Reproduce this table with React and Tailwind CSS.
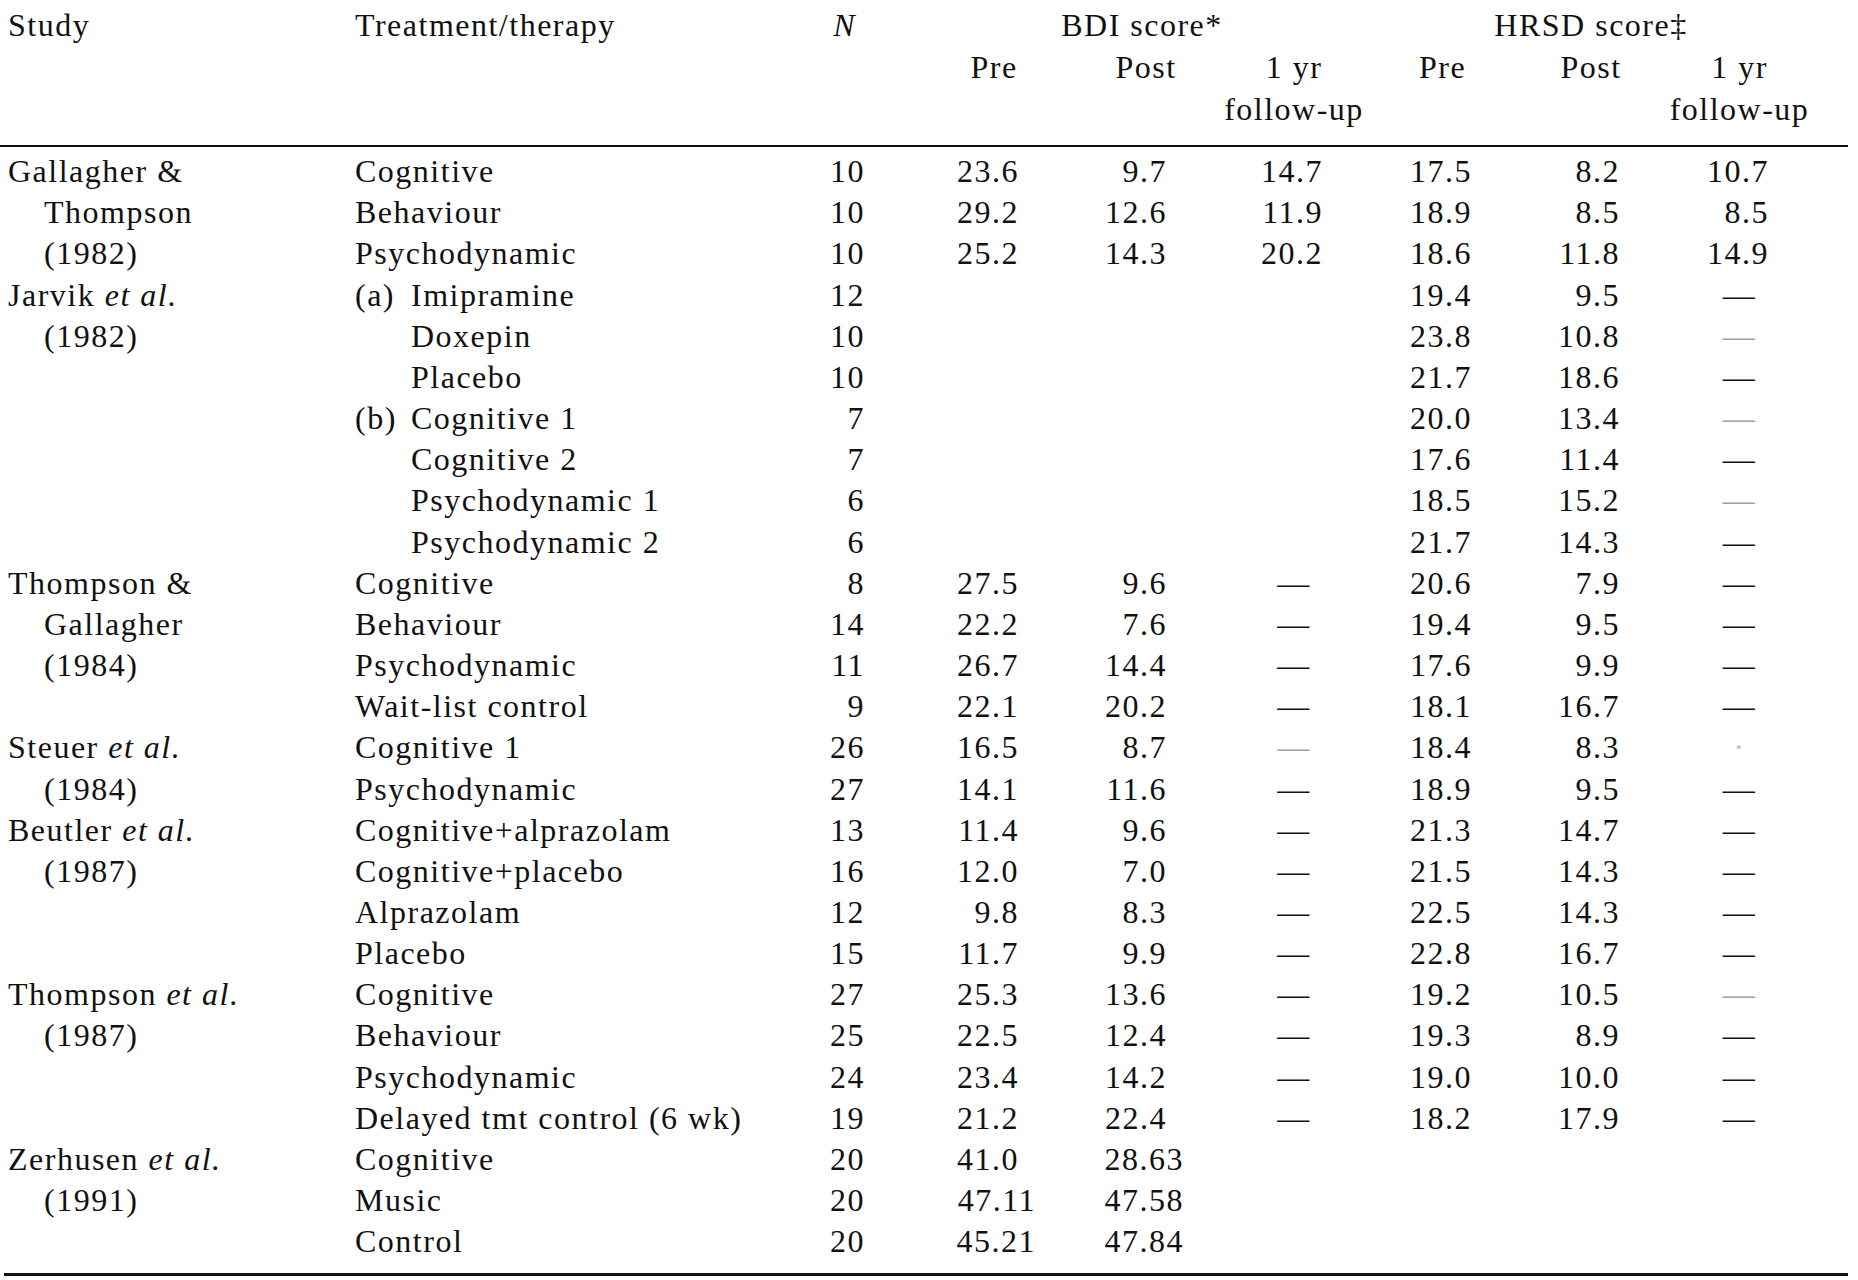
import React from "react";

const D = "—";
const rows = [
  ["Gallagher &", 0, "Cognitive", 0, "10", "23.6", "9.7", "14.7", "17.5", "8.2", "10.7"],
  ["Thompson", 1, "Behaviour", 0, "10", "29.2", "12.6", "11.9", "18.9", "8.5", "8.5"],
  ["(1982)", 1, "Psychodynamic", 0, "10", "25.2", "14.3", "20.2", "18.6", "11.8", "14.9"],
  ["JARVIK", 0, "Imipramine", "(a)", "12", "", "", "", "19.4", "9.5", D],
  ["(1982)", 1, "Doxepin", 1, "10", "", "", "", "23.8", "10.8", "f"],
  ["", 0, "Placebo", 1, "10", "", "", "", "21.7", "18.6", D],
  ["", 0, "Cognitive 1", "(b)", "7", "", "", "", "20.0", "13.4", "f"],
  ["", 0, "Cognitive 2", 1, "7", "", "", "", "17.6", "11.4", D],
  ["", 0, "Psychodynamic 1", 1, "6", "", "", "", "18.5", "15.2", "f"],
  ["", 0, "Psychodynamic 2", 1, "6", "", "", "", "21.7", "14.3", D],
  ["Thompson &", 0, "Cognitive", 0, "8", "27.5", "9.6", D, "20.6", "7.9", D],
  ["Gallagher", 1, "Behaviour", 0, "14", "22.2", "7.6", D, "19.4", "9.5", D],
  ["(1984)", 1, "Psychodynamic", 0, "11", "26.7", "14.4", D, "17.6", "9.9", D],
  ["", 0, "Wait-list control", 0, "9", "22.1", "20.2", D, "18.1", "16.7", D],
  ["STEUER", 0, "Cognitive 1", 0, "26", "16.5", "8.7", "f", "18.4", "8.3", "dot"],
  ["(1984)", 1, "Psychodynamic", 0, "27", "14.1", "11.6", D, "18.9", "9.5", D],
  ["BEUTLER", 0, "Cognitive+alprazolam", 0, "13", "11.4", "9.6", D, "21.3", "14.7", D],
  ["(1987)", 1, "Cognitive+placebo", 0, "16", "12.0", "7.0", D, "21.5", "14.3", D],
  ["", 0, "Alprazolam", 0, "12", "9.8", "8.3", D, "22.5", "14.3", D],
  ["", 0, "Placebo", 0, "15", "11.7", "9.9", D, "22.8", "16.7", D],
  ["THOMPSON", 0, "Cognitive", 0, "27", "25.3", "13.6", D, "19.2", "10.5", "f"],
  ["(1987)", 1, "Behaviour", 0, "25", "22.5", "12.4", D, "19.3", "8.9", D],
  ["", 0, "Psychodynamic", 0, "24", "23.4", "14.2", D, "19.0", "10.0", D],
  ["", 0, "Delayed tmt control (6 wk)", 0, "19", "21.2", "22.4", D, "18.2", "17.9", D],
  ["ZERHUSEN", 0, "Cognitive", 0, "20", "41.0", "28.63", "", "", "", ""],
  ["(1991)", 1, "Music", 0, "20", "47.11", "47.58", "", "", "", ""],
  ["", 0, "Control", 0, "20", "45.21", "47.84", "", "", "", ""],
];

const etal = {
  JARVIK: "Jarvik",
  STEUER: "Steuer",
  BEUTLER: "Beutler",
  THOMPSON: "Thompson",
  ZERHUSEN: "Zerhusen",
};

function StudyCell({ text, indent }) {
  if (etal[text]) {
    return (
      <div className="pl-[8px] whitespace-nowrap">
        {etal[text]} <span className="italic">et al.</span>
      </div>
    );
  }
  return <div className={`${indent ? "pl-[44px]" : "pl-[8px]"} whitespace-nowrap`}>{text}</div>;
}

function TreatCell({ text, sub }) {
  if (sub === "(a)" || sub === "(b)") {
    return (
      <div className="flex whitespace-nowrap">
        <span className="inline-block w-[56px]">{sub}</span>
        <span>{text}</span>
      </div>
    );
  }
  return <div className={`${sub ? "pl-[56px]" : ""} whitespace-nowrap`}>{text}</div>;
}

function Num({ v, pr }) {
  if (v === "") return <div />;
  if (v === D) return <div className="text-center">—</div>;
  if (v === "f") return <div className="text-center text-[#9ca3af]">—</div>;
  if (v === "dot") return <div className="text-center text-[#c0c0c0]">·</div>;
  const two = v.split(".")[1]?.length === 2;
  return (
    <div className={`text-right ${pr}`}>
      <span className={two ? "mr-[-17px]" : ""}>{v}</span>
    </div>
  );
}

export default function App() {
  const grid =
    "grid grid-cols-[355px_435px_126px_156px_148px_148px_149px_148px_149px] w-[1814px]";
  return (
    <div
      className="w-[1858px] h-[1280px] bg-white text-[#111] overflow-hidden"
      style={{ fontFamily: '"Liberation Serif", "Times New Roman", serif' }}
    >
      <div className="text-[32px] tracking-[1.5px] leading-[41.15px]">
        {/* header */}
        <div className={`${grid} pt-[5px]`}>
          <div className="pl-[8px] h-[42px]">Study</div>
          <div>Treatment/therapy</div>
          <div className="text-right pr-[60px] italic">N</div>
          <div className="col-span-3 text-center">BDI score*</div>
          <div className="col-span-3 text-center">HRSD score‡</div>

          <div className="h-[42px]" />
          <div />
          <div />
          <div className="text-center">Pre</div>
          <div className="text-center">Post</div>
          <div className="text-center">1 yr</div>
          <div className="text-center">Pre</div>
          <div className="text-center">Post</div>
          <div className="text-center">1 yr</div>

          <div className="h-[41px]" />
          <div />
          <div />
          <div />
          <div />
          <div className="text-center">follow-up</div>
          <div />
          <div />
          <div className="text-center">follow-up</div>
        </div>
        <div className="mt-[15px] h-[2px] bg-[#111] w-[1848px]" />
        <div className="h-[4px]" />
        {/* body */}
        <div className={grid}>
          {rows.map((r, i) => (
            <React.Fragment key={i}>
              <StudyCell text={r[0]} indent={r[1]} />
              <TreatCell text={r[2]} sub={r[3]} />
              <div className="text-right pr-[51px]">{r[4]}</div>
              <Num v={r[5]} pr="pr-[53px]" />
              <Num v={r[6]} pr="pr-[53px]" />
              <Num v={r[7]} pr="pr-[45px]" />
              <Num v={r[8]} pr="pr-[45px]" />
              <Num v={r[9]} pr="pr-[45px]" />
              <Num v={r[10]} pr="pr-[45px]" />
            </React.Fragment>
          ))}
        </div>
        <div className="mt-[11px] ml-[4px] h-[3px] bg-[#111] w-[1844px]" />
      </div>
    </div>
  );
}
